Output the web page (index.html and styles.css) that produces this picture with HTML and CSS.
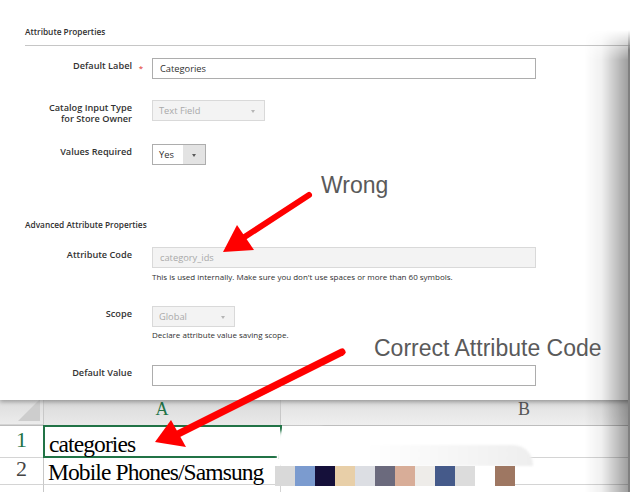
FILE: index.html
```html
<!DOCTYPE html>
<html>
<head>
<meta charset="utf-8">
<link rel="stylesheet" href="styles.css">
</head>
<body>
<div class="page">
  <div class="panel">
    <div class="section-title">Attribute Properties</div>
    <div class="rule"></div>

    <div class="field f1">
      <div class="label">Default Label</div>
      <div class="req">*</div>
      <div class="control"><div class="input wide">Categories</div></div>
    </div>

    <div class="field f2">
      <div class="label two"><div>Catalog Input Type</div><div>for Store Owner</div></div>
      <div class="req"></div>
      <div class="control">
        <div class="select disabled s-type"><span class="sel-text">Text Field</span><span class="sel-arrow"><i></i></span></div>
      </div>
    </div>

    <div class="field f3">
      <div class="label">Values Required</div>
      <div class="req"></div>
      <div class="control">
        <div class="select s-yes"><span class="sel-text">Yes</span><span class="sel-arrow btn"><i></i></span></div>
      </div>
    </div>

    <div class="section-title adv">Advanced Attribute Properties</div>

    <div class="field f4">
      <div class="label">Attribute Code</div>
      <div class="req"></div>
      <div class="control">
        <div class="input wide disabled">category_ids</div>
        <div class="note n1">This is used internally. Make sure you don't use spaces or more than 60 symbols.</div>
      </div>
    </div>

    <div class="field f5">
      <div class="label">Scope</div>
      <div class="req"></div>
      <div class="control">
        <div class="select disabled s-scope"><span class="sel-text">Global</span><span class="sel-arrow"><i></i></span></div>
        <div class="note n2">Declare attribute value saving scope.</div>
      </div>
    </div>

    <div class="field f6">
      <div class="label">Default Value</div>
      <div class="req"></div>
      <div class="control"><div class="input wide"></div></div>
    </div>
  </div>

  <div class="sheet">
    <div class="srow hdr">
      <div class="rh corner"><span class="tri"></span></div>
      <div class="ch cha">A</div>
      <div class="ch chb">B</div>
    </div>
    <div class="srow r1">
      <div class="rh rh-sel">1</div>
      <div class="cell sel"><span class="c1">categories</span></div>
      <div class="cell"></div>
    </div>
    <div class="srow r2">
      <div class="rh">2</div>
      <div class="cell"><span class="c2">Mobile Phones/Samsung</span></div>
      <div class="cell"></div>
    </div>
    <div class="srow r3">
      <div class="rh"></div>
      <div class="cell"></div>
      <div class="cell"></div>
    </div>
  </div>

  <div class="blob b1"></div>
  <div class="blob b2"></div>
  <div class="swatches">
    <span style="background:#d9d9d9"></span>
    <span style="background:#7b9bcf"></span>
    <span style="background:#15103a"></span>
    <span style="background:#e8cfa8"></span>
    <span style="background:#dcdee3"></span>
    <span style="background:#6b6a7d"></span>
    <span style="background:#d8ad98"></span>
    <span style="background:#eeece9"></span>
    <span style="background:#455a8a"></span>
    <span style="background:#dcdcdc"></span>
    <span style="background:#ffffff"></span>
    <span style="background:#9e7762"></span>
  </div>

  <div class="edge-shadow"></div>
  <div class="edge-line"></div>

  <div class="anno wrong">Wrong</div>
  <div class="anno correct">Correct Attribute Code</div>

  <svg class="arrows" width="630" height="492" viewBox="0 0 630 492">
    <line x1="309" y1="195" x2="243" y2="238" stroke="#ff0000" stroke-width="6" stroke-linecap="round"/>
    <polygon points="223,252 237,225 254,250" fill="#ff0000"/>
    <line x1="342" y1="352" x2="178" y2="434" stroke="#ff0000" stroke-width="7" stroke-linecap="round"/>
    <polygon points="155,442 171,420 186,447" fill="#ff0000"/>
  </svg>
</div>
</body>
</html>
```

FILE: styles.css
```css
html, body {
  margin: 0;
  padding: 0;
  background: #ffffff;
}
body {
  width: 630px;
  height: 492px;
  overflow: hidden;
  font-family: "Open Sans", "Liberation Sans", sans-serif;
}
.page {
  position: relative;
  width: 630px;
  height: 492px;
  overflow: hidden;
}

/* ---------- Magento panel ---------- */
.panel {
  position: relative;
  z-index: 2;
  height: 400px;
  box-sizing: border-box;
  padding-top: 27px;
  background: #ffffff;
  box-shadow: 0 2px 4px rgba(0, 0, 0, 0.28);
}
.section-title {
  margin-left: 25px;
  font-size: 8.3px;
  line-height: 10px;
  font-weight: 600;
  color: #303030;
}
.section-title.adv {
  margin-top: 55px;
}
.rule {
  margin: 8px 0 0 25px;
  border-top: 1px solid #c6c6c6;
}
.field {
  display: grid;
  grid-template-columns: 132px 20px auto;
  align-items: start;
}
.f1 { margin-top: 12px; }
.f2 { margin-top: 21px; }
.f3 { margin-top: 23px; }
.f4 { margin-top: 17px; }
.f5 { margin-top: 24px; }
.f6 { margin-top: 25px; }

.label {
  text-align: right;
  font-size: 9.2px;
  line-height: 11px;
  font-weight: 600;
  color: #333333;
  padding-top: 2px;
}
.label.two {
  line-height: 11.5px;
  padding-top: 1.5px;
  margin-bottom: -4px;
}
.req {
  color: #e02b27;
  font-size: 8px;
  line-height: 11px;
  padding-top: 4px;
  text-align: center;
  margin-left: -2px;
}
.input {
  box-sizing: border-box;
  height: 21px;
  border: 1px solid #adadad;
  background: #ffffff;
  padding-left: 7px;
  font-size: 9.3px;
  line-height: 19px;
  color: #303030;
}
.input.wide { width: 384px; }
.input.disabled {
  background: #f3f3f3;
  border-color: #d9d9d9;
  color: #a9a9a9;
}
.select {
  box-sizing: border-box;
  display: flex;
  height: 21px;
  border: 1px solid #adadad;
  background: #ffffff;
  font-size: 9.3px;
  line-height: 19px;
  color: #303030;
}
.select.disabled {
  background: #f3f3f3;
  border-color: #d9d9d9;
  color: #a9a9a9;
}
.s-type { width: 113px; }
.s-yes { width: 54px; }
.s-scope { width: 83px; }
.sel-text {
  flex: 1;
  padding-left: 6px;
}
.sel-arrow {
  width: 22px;
  display: flex;
  align-items: center;
  justify-content: center;
}
.sel-arrow.btn {
  background: #e3e3e3;
}
.sel-arrow i {
  display: block;
  width: 0;
  height: 0;
  border-left: 2.5px solid transparent;
  border-right: 2.5px solid transparent;
  border-top: 3.5px solid #8a8a8a;
  margin-top: 1px;
}
.select.disabled .sel-arrow i {
  border-top-color: #b5b5b5;
}
.sel-arrow.btn i {
  border-top-color: #5a5a5a;
}
.note {
  font-size: 8px;
  line-height: 10px;
  color: #303030;
  white-space: nowrap;
}
.n1 { margin-top: 4px; }
.n2 { margin-top: 3px; }

/* ---------- Spreadsheet ---------- */
.sheet {
  position: relative;
  z-index: 1;
  font-family: "Liberation Serif", "Times New Roman", serif;
}
.srow {
  display: grid;
  grid-template-columns: 44px 237px 1fr;
}
.hdr {
  height: 26px;
  background: linear-gradient(#d6d6d6, #e6e6e6 40%, #efefef);
  border-bottom: 1px solid #bdbdbd;
  box-sizing: border-box;
}
.corner {
  position: relative;
  border-right: 1px solid #c4c4c4;
  background: linear-gradient(#dcdcdc, #ececec);
}
.tri {
  position: absolute;
  right: 3px;
  bottom: 3px;
  width: 0;
  height: 0;
  border-left: 22px solid transparent;
  border-bottom: 22px solid #cdcdcd;
}
.ch {
  font-size: 18px;
  line-height: 18px;
}
.cha {
  text-align: center;
  color: #217346;
  border-right: 1px solid #c8c8c8;
  background: linear-gradient(#d2d2d2, #e0e0e0 40%, #e9e9e9);
}
.chb {
  color: #555555;
  padding-left: 237px;
}
.r1 { height: 29px; }
.r2 { height: 30px; }
.r3 { height: 10px; }
.rh {
  text-align: center;
  font-size: 22px;
  line-height: 28px;
  color: #444444;
  border-right: 1px solid #c8c8c8;
  border-bottom: 1px solid #d4d4d4;
}
.rh-sel {
  color: #217346;
}
.cell {
  border-right: 1px solid #d4d4d4;
  border-bottom: 1px solid #d4d4d4;
  font-size: 23.5px;
  line-height: 24px;
  padding-left: 4px;
  color: #000000;
  white-space: nowrap;
}
.r1 .cell { padding-top: 5px; }
.r2 .cell { padding-top: 5px; }
.cell.sel {
  position: relative;
  border: 2px solid #217346;
  margin-top: -1px;
  margin-left: -1px;
  width: 239px;
  box-sizing: border-box;
}
.cell.sel::after {
  content: "";
  position: absolute;
  right: -4px;
  bottom: -4px;
  width: 5px;
  height: 5px;
  background: #217346;
  border: 1px solid #ffffff;
}
.c1 { letter-spacing: -0.9px; }
.c2 { letter-spacing: -0.9px; }

/* redaction overlays */
.blob {
  position: absolute;
  z-index: 3;
  background: #ffffff;
}
.b1 {
  left: 277px;
  top: 427px;
  width: 55px;
  height: 40px;
  border-radius: 14px;
  filter: blur(1.5px);
}
.b2 {
  left: 278px;
  top: 445px;
  width: 255px;
  height: 21px;
  border-radius: 8px 20px 0 0;
  background: linear-gradient(to right, #ffffff 35%, #eeeeee);
  filter: blur(1px);
}
.swatches {
  position: absolute;
  z-index: 4;
  left: 275px;
  top: 466px;
  display: flex;
}
.swatches span {
  display: block;
  width: 20px;
  height: 20px;
}

/* right edge shadow */
.edge-shadow {
  position: absolute;
  z-index: 5;
  left: 584px;
  top: 30px;
  width: 44px;
  bottom: 0;
  background: linear-gradient(to right, rgba(0, 0, 0, 0), rgba(0, 0, 0, 0.06) 40%, rgba(0, 0, 0, 0.38));
  -webkit-mask-image: linear-gradient(to bottom, transparent, #000 30px);
  mask-image: linear-gradient(to bottom, transparent, #000 30px);
}
.edge-line {
  position: absolute;
  z-index: 5;
  left: 628px;
  top: 30px;
  width: 2px;
  bottom: 0;
  background: #808080;
  -webkit-mask-image: linear-gradient(to bottom, transparent, #000 20px);
  mask-image: linear-gradient(to bottom, transparent, #000 20px);
}

/* annotations */
.anno {
  position: absolute;
  z-index: 6;
  font-family: "Liberation Sans", Arial, sans-serif;
  font-size: 23px;
  line-height: 23px;
  color: #5a5a5a;
  white-space: nowrap;
}
.wrong {
  left: 321px;
  top: 174px;
}
.correct {
  left: 374px;
  top: 337px;
}
.arrows {
  position: absolute;
  z-index: 7;
  left: 0;
  top: 0;
}
```
